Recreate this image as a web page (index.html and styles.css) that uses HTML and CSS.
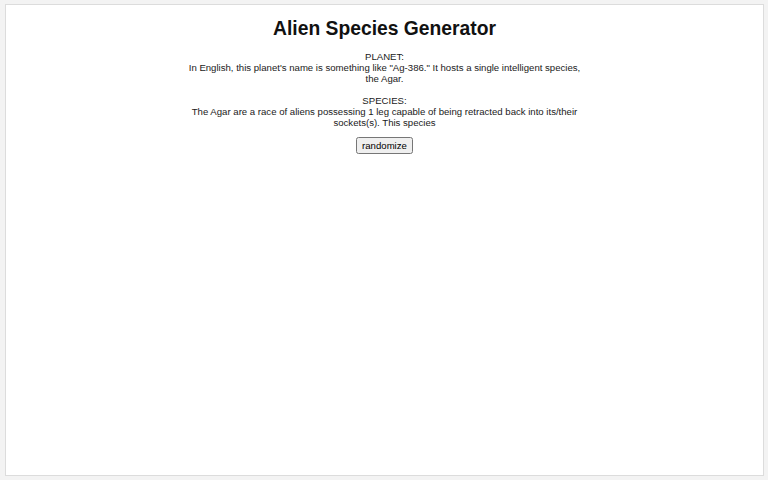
FILE: index.html
```html
<!DOCTYPE html>
<html lang="en">
<head>
    <meta charset="UTF-8">
    <meta name="viewport" content="width=device-width, initial-scale=1.0">
    <title>Alien Species Generator</title>
    <link rel="stylesheet" href="styles.css">
</head>
<body>
    <div class="page">
        <h1>Alien Species Generator</h1>

        <div class="output">
            <p>PLANET:<br>
            In English, this planet's name is something like "Ag-386." It hosts a single intelligent species, the Agar.</p>

            <p>SPECIES:<br>
            The Agar are a race of aliens possessing 1 leg capable of being retracted back into its/their sockets(s). This species</p>
        </div>

        <button class="randomize">randomize</button>
    </div>
</body>
</html>
```

FILE: styles.css
```css
html, body {
    height: 100%;
}
body {
    margin: 0;
    padding: 4px 4px 4px 5px;
    box-sizing: border-box;
    background-color: #f3f3f3;
    font-family: "Liberation Sans", Arial, sans-serif;
}
.page {
    height: 100%;
    box-sizing: border-box;
    background: white;
    border: 1px solid #dcdcdc;
    text-align: center;
    padding-top: 13px;
}
h1 {
    font-size: 19.3px;
    margin: 0 0 11px;
    color: #111;
}
.output {
    max-width: 402px;
    margin: 0 auto;
    font-size: 9.6px;
    line-height: 11px;
    color: #1a1a1a;
}
.output p {
    margin: 0 0 11px;
}
.output p:last-child {
    margin-bottom: 9px;
}
.randomize {
    display: block;
    margin: 0 auto;
    font-family: "Liberation Sans", Arial, sans-serif;
    font-size: 9.6px;
    padding: 1px 4px;
}
```
